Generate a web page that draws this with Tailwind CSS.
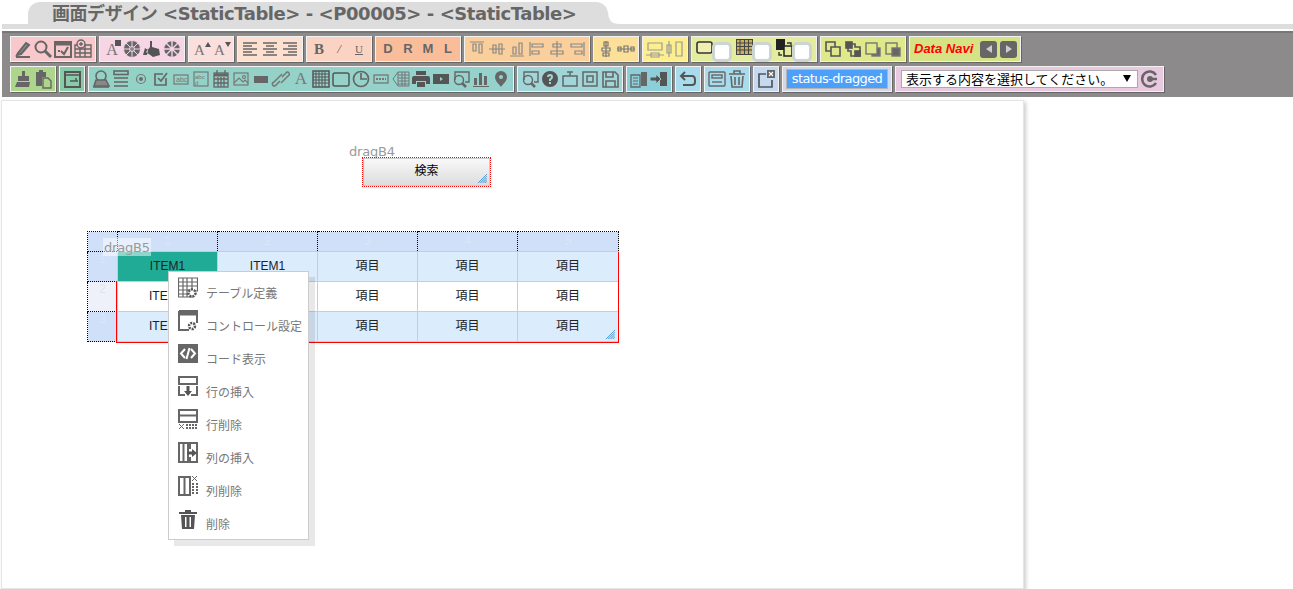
<!DOCTYPE html>
<html lang="ja">
<head>
<meta charset="UTF-8">
<title>画面デザイン</title>
<script src="https://cdn.jsdelivr.net/npm/@tailwindcss/browser@4"></script>
</head>
<body class="bg-white overflow-hidden h-[589px] font-['Liberation_Sans','Noto_Sans_CJK_JP',sans-serif] text-black">

<!-- title tab -->
<div class="h-[31px] pt-[2px] pl-[2px]">
  <div class="flex h-[22px] pl-[26px]">
    <div class="w-[580px] h-[22px] bg-[#dddddd] rounded-t-[12px] pl-[24px] text-[18px] leading-[24px] font-bold text-[#666666] whitespace-nowrap tracking-[-0.45px] font-['DejaVu_Sans','Noto_Sans_CJK_JP',sans-serif]">画面デザイン &lt;StaticTable&gt; - &lt;P00005&gt; - &lt;StaticTable&gt;</div>
    <svg class="w-[12px] h-[22px]" viewBox="0 0 12 22"><path d="M0 8C0 18 3 22 12 22L0 22Z" fill="#dddddd"/></svg>
  </div>
  <div class="h-[5px] bg-[#dddddd]"></div>
</div>

<!-- toolbar -->
<div class="ml-[2px] h-[66px] bg-[#8c8a8a] border-t-2 border-[#777777] pt-[3px] pl-[8px] flex flex-col gap-[4px]">

  <!-- row 1 -->
  <div class="flex gap-[3px] h-[26px]">
    <div class="flex items-center px-[2px] border border-[#f2f2f2] shadow-[1px_1px_0_#666] bg-[#f8c8cc] w-[86px]">
      <svg class="w-5 h-5 fill-none stroke-[#666666] stroke-2" viewBox="0 0 20 20"><path d="M3 18H17"/><path d="M5 14L13 4L16 6L8 15L4 16Z" class="fill-[#888888]"/></svg>
      <svg class="w-5 h-5 fill-none stroke-[#666666] stroke-2" viewBox="0 0 20 20"><circle cx="8" cy="8" r="5.5"/><path d="M12 12L18 18" class="stroke-[3px]"/></svg>
      <svg class="w-5 h-5 fill-none stroke-[#666666] stroke-2" viewBox="0 0 20 20"><rect x="2" y="3" width="16" height="15"/><path d="M2 5H18" class="stroke-[3px]"/><path d="M5 12H7M8 12L11 15L15 8"/></svg>
      <svg class="w-5 h-5 fill-none stroke-[#666666] stroke-[1.4px]" viewBox="0 0 20 20"><path d="M2 6H18V18H2ZM2 10H18M2 14H18M7 6V18M12 6V18"/><circle cx="8" cy="5" r="4" class="fill-[#f8c8cc]"/><path d="M6 5H10M8 3V7"/></svg>
    </div>
    <div class="flex items-center px-[2px] border border-[#f2f2f2] shadow-[1px_1px_0_#666] bg-[#f6d5e5] w-[86px]">
      <div class="relative w-5 h-5 text-center text-[16px] leading-[22px] text-[#777777] font-['Liberation_Serif',serif]">A<span class="absolute right-[1px] top-[1px] w-[6px] h-[6px] bg-[#555555]"></span></div>
      <svg class="w-5 h-5 fill-[#666666] stroke-[#f6d5e5]" viewBox="0 0 20 20"><circle cx="10" cy="10" r="8.5"/><path d="M10 2V18M2 10H18M4 4L16 16M16 4L4 16" fill="none"/><circle cx="10" cy="10" r="2.5" class="fill-[#888888]"/></svg>
      <svg class="w-5 h-5 fill-[#555555]" viewBox="0 0 20 20"><path d="M8 2H10V8L17 10L18 16L11 18L4 13L8 8ZM3 9L1 16H5L6 11Z"/></svg>
      <svg class="w-5 h-5 fill-[#666666] stroke-[#f6d5e5] stroke-[1.4px]" viewBox="0 0 20 20"><circle cx="10" cy="10" r="8.5"/><path d="M10 2V18M2 10H18M4 4L16 16M16 4L4 16" fill="none"/></svg>
    </div>
    <div class="flex items-center px-[2px] border border-[#f2f2f2] shadow-[1px_1px_0_#666] bg-[#fbdfdc] w-[46px]">
      <div class="relative w-5 h-5 text-[15px] leading-[22px] pl-[3px] text-[#777777] font-['Liberation_Serif',serif]">A<svg class="absolute right-0 top-[3px] w-[6px] h-[5px] fill-[#555555]" viewBox="0 0 6 5"><path d="M3 0L6 5H0Z"/></svg></div>
      <div class="relative w-5 h-5 text-[15px] leading-[22px] pl-[3px] text-[#777777] font-['Liberation_Serif',serif]">A<svg class="absolute right-0 top-[3px] w-[6px] h-[5px] fill-[#555555]" viewBox="0 0 6 5"><path d="M3 5L6 0H0Z"/></svg></div>
    </div>
    <div class="flex items-center px-[2px] border border-[#f2f2f2] shadow-[1px_1px_0_#666] bg-[#fde0d0] w-[66px]">
      <svg class="w-5 h-5 fill-none stroke-[#666666] stroke-[1.5px]" viewBox="0 0 20 20"><path d="M3 4H17M3 7H12M3 10H17M3 13H12M3 16H17"/></svg>
      <svg class="w-5 h-5 fill-none stroke-[#666666] stroke-[1.5px]" viewBox="0 0 20 20"><path d="M3 4H17M6 7H14M3 10H17M6 13H14M3 16H17"/></svg>
      <svg class="w-5 h-5 fill-none stroke-[#666666] stroke-[1.5px]" viewBox="0 0 20 20"><path d="M3 4H17M8 7H17M3 10H17M8 13H17M3 16H17"/></svg>
    </div>
    <div class="flex items-center px-[2px] border border-[#f2f2f2] shadow-[1px_1px_0_#666] bg-[#fbd3c3] w-[66px] text-[#666666] text-center font-['Liberation_Serif',serif]">
      <span class="w-5 text-[15px] font-bold">B</span>
      <span class="w-5 text-[13px] italic">/</span>
      <span class="w-5 text-[11px] underline">U</span>
    </div>
    <div class="flex items-center px-[2px] border border-[#f2f2f2] shadow-[1px_1px_0_#666] bg-[#f9bd9a] w-[86px] text-[#666666] text-center text-[13px] font-bold">
      <span class="w-5">D</span><span class="w-5">R</span><span class="w-5">M</span><span class="w-5">L</span>
    </div>
    <div class="flex items-center px-[2px] border border-[#f2f2f2] shadow-[1px_1px_0_#666] bg-[#fbcf9b] w-[126px]">
      <svg class="w-5 h-5 fill-none stroke-[#888888] stroke-[1.2px]" viewBox="0 0 20 20"><path d="M3 3H17M6 5H9V12H6ZM12 5H15V14H12Z"/></svg>
      <svg class="w-5 h-5 fill-none stroke-[#888888] stroke-[1.2px]" viewBox="0 0 20 20"><path d="M2 10H18M6 6H9V14H6ZM12 5H15V15H12Z"/></svg>
      <svg class="w-5 h-5 fill-none stroke-[#888888] stroke-[1.2px]" viewBox="0 0 20 20"><path d="M3 17H17M6 8H9V15H6ZM12 4H15V15H12Z"/></svg>
      <svg class="w-5 h-5 fill-none stroke-[#888888] stroke-[1.2px]" viewBox="0 0 20 20"><path d="M3 3V17M5 5H16V8H5ZM5 12H12V15H5Z"/></svg>
      <svg class="w-5 h-5 fill-none stroke-[#888888] stroke-[1.2px]" viewBox="0 0 20 20"><path d="M10 2V18M6 5H14V8H6ZM4 12H16V15H4Z"/></svg>
      <svg class="w-5 h-5 fill-none stroke-[#888888] stroke-[1.2px]" viewBox="0 0 20 20"><path d="M17 3V17M4 5H15V8H4ZM8 12H15V15H8Z"/></svg>
    </div>
    <div class="flex items-center px-[2px] border border-[#f2f2f2] shadow-[1px_1px_0_#666] bg-[#fcdf98] w-[46px]">
      <svg class="w-5 h-5 fill-none stroke-[#777777] stroke-[1.2px]" viewBox="0 0 20 20"><path d="M10 2V18M8 3H12V7H8ZM6 9H14V12H6ZM7 14H13V17H7Z"/></svg>
      <svg class="w-5 h-5 fill-none stroke-[#777777] stroke-[1.2px]" viewBox="0 0 20 20"><path d="M1 10H19M2 8H5V12H2ZM8 7H12V13H8ZM15 8H18V12H15Z"/></svg>
    </div>
    <div class="flex items-center px-[2px] border border-[#f2f2f2] shadow-[1px_1px_0_#666] bg-[#fdef8f] w-[46px]">
      <svg class="w-5 h-5 fill-none stroke-[#999999] stroke-[1.2px]" viewBox="0 0 20 20"><path d="M3 4H17V11H3ZM1 16H19M6 14H14V18H6Z"/></svg>
      <svg class="w-5 h-5 fill-none stroke-[#999999] stroke-[1.2px]" viewBox="0 0 20 20"><path d="M11 3H17V17H11ZM4 2V18M2 6H6V14H2Z"/></svg>
    </div>
    <div class="flex items-center pl-[4px] border border-[#f2f2f2] shadow-[1px_1px_0_#666] bg-[#e4ec9f] w-[126px]">
      <div class="relative w-10 h-full">
        <svg class="absolute left-0 top-[3px] w-[17px] h-[15px]" viewBox="0 0 17 15"><rect x="1" y="2" width="15" height="11" rx="2" fill="#f0eeb0" stroke="#333333" stroke-width="1.6"/></svg>
        <div class="absolute left-[16px] top-[5px] w-[20px] h-[20px] bg-white border-[3px] border-[#ccd5d2] rounded-[5px]"></div>
      </div>
      <div class="relative w-10 h-full">
        <svg class="absolute left-0 top-[2px] w-[17px] h-[16px] fill-none stroke-[#444444] stroke-[1px]" viewBox="0 0 17 16"><rect x="0.5" y="0.5" width="16" height="15" fill="#c8b060"/><path d="M0 4H17M0 7.500H17M0 11H17M4 0V16M8.500 0V16M12.500 0V16"/></svg>
        <div class="absolute left-[16px] top-[5px] w-[20px] h-[20px] bg-white border-[3px] border-[#ccd5d2] rounded-[5px]"></div>
      </div>
      <div class="relative w-10 h-full">
        <svg class="absolute left-0 top-[2px] w-[17px] h-[18px]" viewBox="0 0 17 18"><rect x="0" y="0" width="9" height="11" fill="#222222"/><rect x="8" y="7" width="8" height="10" fill="#e4ec9f" stroke="#222222" stroke-width="1.5"/><path d="M11 4H15V6M3 13V16H6" fill="none" stroke="#333333" stroke-width="1.4"/></svg>
        <div class="absolute left-[16px] top-[5px] w-[20px] h-[20px] bg-white border-[3px] border-[#ccd5d2] rounded-[5px]"></div>
      </div>
    </div>
    <div class="flex items-center px-[2px] border border-[#f2f2f2] shadow-[1px_1px_0_#666] bg-[#dfe88a] w-[86px]">
      <svg class="w-5 h-5 fill-none stroke-[#555555] stroke-[1.6px]" viewBox="0 0 20 20"><path d="M3 3H12V8H8V12H3ZM12 8H17V17H8V12"/></svg>
      <svg class="w-5 h-5 fill-none stroke-[#555555] stroke-[1.6px]" viewBox="0 0 20 20"><rect x="3" y="3" width="6" height="6" fill="#555555"/><path d="M9 5H12V8H17V17H8V12H5V9"/><rect x="12" y="12" width="5" height="5" fill="#555555"/></svg>
      <svg class="w-5 h-5 fill-none stroke-[#777777] stroke-[1.4px]" viewBox="0 0 20 20"><rect x="9" y="9" width="8" height="8" fill="#666666"/><rect x="3" y="4" width="11" height="11" fill="#dfe88a"/></svg>
      <svg class="w-5 h-5 fill-none stroke-[#777777] stroke-[1.4px]" viewBox="0 0 20 20"><rect x="3" y="4" width="11" height="11"/><rect x="9" y="9" width="8" height="8" fill="#666666"/></svg>
    </div>
    <div class="flex items-center pl-[4px] border border-[#f2f2f2] shadow-[1px_1px_0_#666] bg-[#d5e384] w-[112px]">
      <span class="w-[66px] text-[13px] italic font-bold text-[#ff0000] whitespace-nowrap">Data Navi</span>
      <span class="w-[17px] h-[17px] rounded-[3px] bg-[#666666] flex items-center justify-center"><svg class="w-[6px] h-[8px] fill-[#cccccc]" viewBox="0 0 6 8"><path d="M6 0V8L0 4Z"/></svg></span>
      <span class="w-[17px] h-[17px] ml-[3px] rounded-[3px] bg-[#666666] flex items-center justify-center"><svg class="w-[6px] h-[8px] fill-[#cccccc]" viewBox="0 0 6 8"><path d="M0 0V8L6 4Z"/></svg></span>
    </div>
  </div>

  <!-- row 2 -->
  <div class="flex gap-[3px] h-[26px]">
    <div class="flex items-center px-[2px] border border-[#f2f2f2] shadow-[1px_1px_0_#666] bg-[#add58c] w-[46px]">
      <svg class="w-5 h-5 fill-[#666666]" viewBox="0 0 20 20"><path d="M9 2H12V7H16V12H5V7H9ZM4 13H17L16 18H2Z"/></svg>
      <svg class="w-5 h-5 fill-[#666666]" viewBox="0 0 20 20"><path d="M3 3H6V1H10V3H13V8H9V17H3Z"/><path d="M10 9H15L18 12V19H10Z" class="fill-none stroke-[#666666] stroke-[1.4px]"/></svg>
    </div>
    <div class="flex items-center px-[2px] border border-[#f2f2f2] shadow-[1px_1px_0_#666] bg-[#88cba8] w-[26px]">
      <svg class="w-5 h-5 fill-none stroke-[#555555] stroke-2" viewBox="0 0 20 20"><rect x="3" y="3" width="15" height="15"/><path d="M3 6H18M8 12H16M14 9V12" class="stroke-[1.5px]"/></svg>
    </div>
    <div class="flex items-center px-[2px] border border-[#f2f2f2] shadow-[1px_1px_0_#666] bg-linear-to-r from-[#93d2c5] to-[#96d2cd] w-[426px]">
      <svg class="w-5 h-5 fill-none stroke-[#666666] stroke-[1.6px]" viewBox="0 0 20 20"><circle cx="10" cy="7" r="5"/><path d="M3 17L5 11H15L18 17Z" class="fill-[#888888]"/><path d="M2 18H18"/></svg>
      <svg class="w-5 h-5 fill-none stroke-[#666666] stroke-[1.6px]" viewBox="0 0 20 20"><rect x="3" y="2" width="14" height="3.500"/><path d="M3 9H17M3 13H17M3 17H17"/></svg>
      <svg class="w-5 h-5 fill-none stroke-[#777777] stroke-[1.2px]" viewBox="0 0 20 20"><circle cx="10" cy="10" r="4.500"/><circle cx="10" cy="10" r="1.500" class="fill-[#666666]"/></svg>
      <svg class="w-5 h-5 fill-none stroke-[#666666] stroke-[1.7px]" viewBox="0 0 20 20"><path d="M15 9V16H4V5H12M7 9L10 12L16 4"/></svg>
      <svg class="w-5 h-5 fill-none stroke-[#777777] stroke-[1.2px]" viewBox="0 0 20 20"><rect x="3" y="6" width="14" height="9"/><text x="5" y="13" class="fill-[#777777] stroke-0 text-[7px]">abc</text></svg>
      <svg class="w-5 h-5 fill-none stroke-[#777777] stroke-[1.2px]" viewBox="0 0 20 20"><rect x="3" y="3" width="14" height="14"/><text x="4" y="9.500" class="fill-[#777777] stroke-0 text-[6px]">abc</text><text x="4" y="15.500" class="fill-[#777777] stroke-0 text-[6px]">d</text></svg>
      <svg class="w-5 h-5 fill-none stroke-[#666666] stroke-[1.3px]" viewBox="0 0 20 20"><rect x="3" y="4" width="14" height="14"/><path d="M3 6H17" class="stroke-[3px]"/><path d="M6 1V5M14 1V5M3 10H17M3 14H17M7 8V18M10 8V18M13 8V18"/></svg>
      <svg class="w-5 h-5 fill-none stroke-[#777777] stroke-[1.2px]" viewBox="0 0 20 20"><rect x="3" y="4" width="14" height="12"/><path d="M3 14L8 9L12 13L14 11L17 14"/><circle cx="13" cy="8" r="1.500"/></svg>
      <svg class="w-5 h-5 fill-[#666666]" viewBox="0 0 20 20"><rect x="3" y="7" width="14" height="7"/></svg>
      <svg class="w-5 h-5 fill-none stroke-[#777777] stroke-[1.5px]" viewBox="0 0 20 20"><path d="M9 12L4 17A2 2 0 0 1 3 13L11 5M11 8L16 3A2 2 0 0 1 18 6L10 14"/></svg>
      <span class="w-5 text-center text-[17px] text-[#777777] font-['Liberation_Serif',serif]">A</span>
      <svg class="w-5 h-5 fill-none stroke-[#555555] stroke-[1px]" viewBox="0 0 20 20"><rect x="2" y="2" width="16" height="16" class="stroke-[1.500px]"/><path d="M2 5H18M2 8H18M2 11H18M2 14H18M5 2V18M8 2V18M11 2V18M14 2V18"/></svg>
      <svg class="w-5 h-5 fill-none stroke-[#555555] stroke-[1.5px]" viewBox="0 0 20 20"><rect x="2" y="4" width="16" height="13" rx="2"/></svg>
      <svg class="w-5 h-5 fill-none stroke-[#666666] stroke-[1.7px]" viewBox="0 0 20 20"><circle cx="10" cy="10" r="7.500"/><path d="M10 4V10H16"/></svg>
      <svg class="w-5 h-5 fill-none stroke-[#777777] stroke-[1.3px]" viewBox="0 0 20 20"><rect x="3" y="6" width="14" height="8"/><path d="M5 10H15" stroke-dasharray="2 1" class="stroke-2"/></svg>
      <svg class="w-5 h-5 fill-none stroke-[#777777] stroke-[1px]" viewBox="0 0 20 20"><path d="M7 3H18V17H7ZM7 6H18M7 9H18M7 12H18M7 15H18M11 3V17M14 3V17M7 3L2 10L7 17"/></svg>
      <svg class="w-5 h-5 fill-[#555555]" viewBox="0 0 20 20"><path d="M5 2H15V6H5ZM3 7H17Q19 7 19 9V15H15V12H5V15H1V9Q1 7 3 7ZM6 13H14V18H6Z"/></svg>
      <svg class="w-5 h-5 fill-[#555555]" viewBox="0 0 20 20"><path d="M2 5H18V15H2Z"/><path d="M9 8L12 10L9 12Z" class="fill-[#93d2c5]"/></svg>
      <svg class="w-5 h-5 fill-none stroke-[#666666] stroke-[1.4px]" viewBox="0 0 20 20"><path d="M4 11V3H18V13H14"/><circle cx="8" cy="11" r="4.500"/><path d="M11 14L15 18" class="stroke-[2.500px]"/></svg>
      <svg class="w-5 h-5 fill-[#666666]" viewBox="0 0 20 20"><path d="M3 9H6V16H3ZM8 4H11V16H8ZM13 7H16V16H13ZM2 17H18V18H2Z"/></svg>
      <svg class="w-5 h-5 fill-[#666666]" viewBox="0 0 20 20"><path fill-rule="evenodd" d="M10 2A6 6 0 0 1 16 8C16 12 12 15 10 18C8 15 4 12 4 8A6 6 0 0 1 10 2ZM10 6A2 2 0 1 0 10 10A2 2 0 1 0 10 6Z"/></svg>
    </div>
    <div class="flex items-center px-[2px] border border-[#f2f2f2] shadow-[1px_1px_0_#666] bg-[#a0d6d8] w-[106px]">
      <svg class="w-5 h-5 fill-none stroke-[#666666] stroke-[1.4px]" viewBox="0 0 20 20"><path d="M4 11V3H18V13H14"/><circle cx="8" cy="11" r="4.500"/><path d="M11 14L15 18" class="stroke-[2.500px]"/></svg>
      <svg class="w-5 h-5 fill-[#555555]" viewBox="0 0 20 20"><path fill-rule="evenodd" d="M10 2A8 8 0 1 1 10 18A8 8 0 1 1 10 2ZM7 8Q7 5 10 5Q13 5 13 8Q13 10 11 11V12H9V10Q11 9 11 8Q11 7 10 7Q9 7 9 8ZM9 13H11V15H9Z"/></svg>
      <svg class="w-5 h-5 fill-none stroke-[#666666] stroke-[1.5px]" viewBox="0 0 20 20"><path d="M3 7H17V17H3ZM10 7V3M7 3H13" /></svg>
      <svg class="w-5 h-5 fill-none stroke-[#666666] stroke-[1.5px]" viewBox="0 0 20 20"><rect x="3" y="3" width="14" height="14"/><rect x="7" y="7" width="6" height="6"/></svg>
      <svg class="w-5 h-5 fill-none stroke-[#666666] stroke-[1.6px]" viewBox="0 0 20 20"><path d="M3 3H15L18 6V18H3ZM6 3V8H13V3M6 18V12H15V18"/></svg>
    </div>
    <div class="flex items-center px-[2px] border border-[#f2f2f2] shadow-[1px_1px_0_#666] bg-[#8ccfd8] w-[46px]">
      <svg class="w-5 h-5 fill-[#666666]" viewBox="0 0 20 20"><path d="M12 3H18V17H12Z"/><path d="M2 6H11V18H2Z" class="fill-none stroke-[#666666] stroke-[1.3px]"/><path d="M4 9H9M4 12H9M4 15H9" class="stroke-[#666666]"/></svg>
      <svg class="w-5 h-5 fill-[#555555]" viewBox="0 0 20 20"><path d="M11 3H18V17H11Z"/><path d="M1 8H7V5L12 10L7 15V12H1Z" class="fill-[#555555] stroke-[#8ccfd8]"/></svg>
    </div>
    <div class="flex items-center px-[2px] border border-[#f2f2f2] shadow-[1px_1px_0_#666] bg-[#a8dcec] w-[26px]">
      <svg class="w-5 h-5 fill-none stroke-[#555555] stroke-2" viewBox="0 0 20 20"><path d="M7 3L3 7L7 11M3 7H14Q17 7 17 11V13Q17 16 14 16H5"/></svg>
    </div>
    <div class="flex items-center px-[2px] border border-[#f2f2f2] shadow-[1px_1px_0_#666] bg-[#a8dcec] w-[46px]">
      <svg class="w-5 h-5 fill-none stroke-[#666666] stroke-[1.4px]" viewBox="0 0 20 20"><rect x="2" y="3" width="16" height="14" rx="1"/><rect x="5" y="6" width="10" height="3"/><path d="M5 13H15"/></svg>
      <svg class="w-5 h-5 fill-none stroke-[#666666] stroke-[1.6px]" viewBox="0 0 20 20"><path d="M2 5H18M7 5V2H13V5M4 7L5 18H15L16 7M8 8V16M12 8V16"/></svg>
    </div>
    <div class="flex items-center px-[2px] border border-[#f2f2f2] shadow-[1px_1px_0_#666] bg-[#c5d9f0] w-[26px]">
      <svg class="w-5 h-5 fill-none stroke-[#555555] stroke-[1.7px]" viewBox="0 0 20 20"><path d="M10 5H3V18H16V11"/><rect x="11" y="1" width="8" height="8" class="fill-[#666666] stroke-0"/><path d="M13 3L17 7M17 3L13 7" class="stroke-white stroke-[1.2px]"/></svg>
    </div>
    <div class="flex items-center justify-center border border-[#f2f2f2] shadow-[1px_1px_0_#666] bg-[#d0d8ea] w-[110px]">
      <span class="w-[102px] h-[20px] bg-[#4da0fa] border border-[#b5b5b5] text-white text-[13px] leading-[18px] text-center whitespace-nowrap font-['DejaVu_Sans',sans-serif] tracking-[-0.6px]">status-dragged</span>
    </div>
    <div class="flex items-center pl-[5px] border border-[#f2f2f2] shadow-[1px_1px_0_#666] bg-[#e8c9e0] w-[269px]">
      <div class="relative w-[237px] h-[18px] bg-white border border-[#aaaaaa] pl-[4px] text-[13px] leading-[18px] whitespace-nowrap">表示する内容を選択してください。<svg class="absolute right-[6px] top-[4px] w-[8px] h-[7px] fill-black" viewBox="0 0 8 7"><path d="M0 0H8L4 7Z"/></svg></div>
      <svg class="w-[18px] h-[18px] ml-[3px] fill-none stroke-[#666666] stroke-[2.500px]" viewBox="0 0 18 18"><path d="M15 13A7.500 7.500 0 1 1 15 5"/><path d="M9 9H16" /><circle cx="9" cy="9" r="3" class="fill-[#666666] stroke-0"/></svg>
    </div>
  </div>
</div>

<!-- design canvas -->
<div class="relative ml-[1px] mt-[3px] w-[1023px] h-[489px] bg-white border border-[#e5e5e5] shadow-[2px_2px_4px_rgba(0,0,0,0.2)]">

  <div class="absolute left-[347px] top-[43px] text-[13px] leading-[15px] text-[#999999] font-['DejaVu_Sans',sans-serif] tracking-[-0.2px]">dragB4</div>
  <div class="absolute left-[360px] top-[56px] w-[129px] h-[30px] border border-dotted border-[#ff0000]">
    <div class="h-full border border-[#cccccc] bg-linear-to-b from-[#f8f8f8] to-[#dddddd] text-[12px] leading-[25px] text-center">検索</div>
    <svg class="absolute right-[3px] bottom-[3px] w-[9px] h-[9px] stroke-[#4a9bd8]" viewBox="0 0 10 10"><path d="M0 10L10 0M2 10L10 2M4 10L10 4M6 10L10 6M8 10L10 8"/></svg>
  </div>

  <!-- table -->
  <table class="absolute left-[85px] top-[130px] w-[531px] table-fixed border-collapse text-[12px] leading-[14px] text-center text-[#222222] [&_td]:pb-[2px]">
    <colgroup><col class="w-[30px]"><col class="w-[100px]"><col class="w-[100px]"><col class="w-[100px]"><col class="w-[100px]"><col class="w-[101px]"></colgroup>
    <tr class="h-[20px] bg-[#cfe0f8] text-[#dbe6f8]">
      <td class="border border-dotted border-black"></td>
      <td class="border border-dotted border-black">1</td>
      <td class="border border-dotted border-black">2</td>
      <td class="border border-dotted border-black">3</td>
      <td class="border border-dotted border-black">4</td>
      <td class="border border-dotted border-black">5</td>
    </tr>
    <tr class="h-[30px] bg-[#dbecfd]">
      <td class="border border-dotted border-black bg-[#cfe0f8] text-[#dbe6f8] align-top">1</td>
      <td class="border border-[#cccccc] bg-[#20ab96]">ITEM1</td>
      <td class="border border-[#cccccc]">ITEM1</td>
      <td class="border border-[#cccccc]">項目</td>
      <td class="border border-[#cccccc]">項目</td>
      <td class="border border-[#cccccc]">項目</td>
    </tr>
    <tr class="h-[30px] bg-white">
      <td class="border border-dotted border-black bg-[#eef1fa] text-[#e0e3ee] align-top">2</td>
      <td class="border border-[#cccccc] text-left pl-[31px]">ITE</td>
      <td class="border border-[#cccccc]"></td>
      <td class="border border-[#cccccc]">項目</td>
      <td class="border border-[#cccccc]">項目</td>
      <td class="border border-[#cccccc]">項目</td>
    </tr>
    <tr class="h-[30px] bg-[#dbecfd]">
      <td class="border border-dotted border-black bg-[#cfe0f8] text-[#dbe6f8] align-top">3</td>
      <td class="border border-[#cccccc] text-left pl-[31px]">ITE</td>
      <td class="border border-[#cccccc]"></td>
      <td class="border border-[#cccccc]">項目</td>
      <td class="border border-[#cccccc]">項目</td>
      <td class="border border-[#cccccc]">項目</td>
    </tr>
  </table>
  <!-- red selection edge -->
  <div class="absolute left-[114px] top-[180px] w-px h-[61px] bg-[#ff0000]"></div>
  <div class="absolute left-[114px] top-[241px] w-[503px] h-px bg-[#ff0000]"></div>
  <div class="absolute left-[616px] top-[151px] w-px h-[91px] bg-[#ff0000]"></div>
  <svg class="absolute left-[604px] top-[229px] w-[9px] h-[9px] stroke-[#4a9bd8]" viewBox="0 0 10 10"><path d="M0 10L10 0M2 10L10 2M4 10L10 4M6 10L10 6M8 10L10 8"/></svg>
  <div class="absolute left-[101px] top-[137px] h-[18px] px-px bg-white/50 text-[13px] leading-[19px] text-[#999999] font-['DejaVu_Sans',sans-serif] tracking-[-0.2px]">dragB5</div>

  <!-- context menu -->
  <div class="absolute left-[166px] top-[170px] w-[141px] h-[269px] bg-white border border-[#cccccc] shadow-[6px_6px_0_rgba(0,0,0,0.09)] pt-[5px] pl-[9px] text-[12px] text-[#777777]">
    <div class="flex h-[33px]">
      <svg class="w-5 h-[22px] fill-none stroke-[#666666] stroke-[1.2px]" viewBox="0 0 20 22"><path d="M0.500 1H19.500V14H14V20H0.500ZM0.500 5H19M0.500 9H19M0.500 13H13M0.500 17H10M5 1V20M9 1V20M14 1V14"/><circle cx="14" cy="16" r="3.500" class="stroke-[#555555] stroke-[2.500px] fill-white" stroke-dasharray="2 1"/></svg>
      <span class="ml-[8px] mt-[8px]">テーブル定義</span>
    </div>
    <div class="flex h-[33px]">
      <svg class="w-5 h-[22px] fill-none stroke-[#666666] stroke-2" viewBox="0 0 20 22"><path d="M1 1H19V13M1 1V20H11"/><path d="M1 3.500H19" class="stroke-[4px]"/><circle cx="14" cy="16" r="3" class="stroke-[#555555] stroke-[2.500px]" stroke-dasharray="2 1"/></svg>
      <span class="ml-[8px] mt-[8px] whitespace-nowrap">コントロール設定</span>
    </div>
    <div class="flex h-[33px]">
      <svg class="w-5 h-[22px] fill-[#666666]" viewBox="0 0 20 22"><rect y="1" width="20" height="19"/><path d="M7 6L3 10.500L7 15M13 6L17 10.500L13 15M11.500 5L8.500 16" class="fill-none stroke-white stroke-2"/></svg>
      <span class="ml-[8px] mt-[8px]">コード表示</span>
    </div>
    <div class="flex h-[33px]">
      <svg class="w-5 h-[22px] fill-none stroke-[#666666] stroke-2" viewBox="0 0 20 22"><path d="M1 1H19V8H1ZM1 10V19H7M19 10V19H13"/><path d="M10 10V16" class="stroke-[#555555] stroke-[3px]"/><path d="M6 15H14L10 20Z" class="fill-[#555555] stroke-0"/></svg>
      <span class="ml-[8px] mt-[8px]">行の挿入</span>
    </div>
    <div class="flex h-[33px]">
      <svg class="w-5 h-[22px] fill-none stroke-[#666666] stroke-2" viewBox="0 0 20 22"><path d="M1 1H19V13H1ZM1 6.500H19"/><path d="M1 15L6 20M6 15L1 20" class="stroke-1"/><path d="M8 16H20M8 19H20" stroke-dasharray="2 1"/></svg>
      <span class="ml-[8px] mt-[8px]">行削除</span>
    </div>
    <div class="flex h-[33px]">
      <svg class="w-5 h-[22px] fill-none stroke-[#666666] stroke-2" viewBox="0 0 20 22"><path d="M1 1H10V20H1ZM5.500 1V20M12 7V1H19V20H12V15"/><path d="M9 11H15" class="stroke-[#555555] stroke-[3px]"/><path d="M14 7V15L19 11Z" class="fill-[#555555] stroke-0"/></svg>
      <span class="ml-[8px] mt-[8px]">列の挿入</span>
    </div>
    <div class="flex h-[33px]">
      <svg class="w-5 h-[22px] fill-none stroke-[#666666] stroke-2" viewBox="0 0 20 22"><path d="M1 2H12V20H1ZM6.500 2V20"/><path d="M14 1L19 6M19 1L14 6" class="stroke-1"/><path d="M15 8V20M19 8V20" stroke-dasharray="2 1"/></svg>
      <span class="ml-[8px] mt-[8px]">列削除</span>
    </div>
    <div class="flex h-[33px]">
      <svg class="w-5 h-[22px] fill-[#555555]" viewBox="0 0 20 22"><path d="M7 2H13V4H19V6H1V4H7ZM3 7H17L16 21H4ZM7 9V19H8.500V9ZM11.500 9V19H13V9Z" fill-rule="evenodd"/></svg>
      <span class="ml-[8px] mt-[8px]">削除</span>
    </div>
  </div>
</div>

</body>
</html>
